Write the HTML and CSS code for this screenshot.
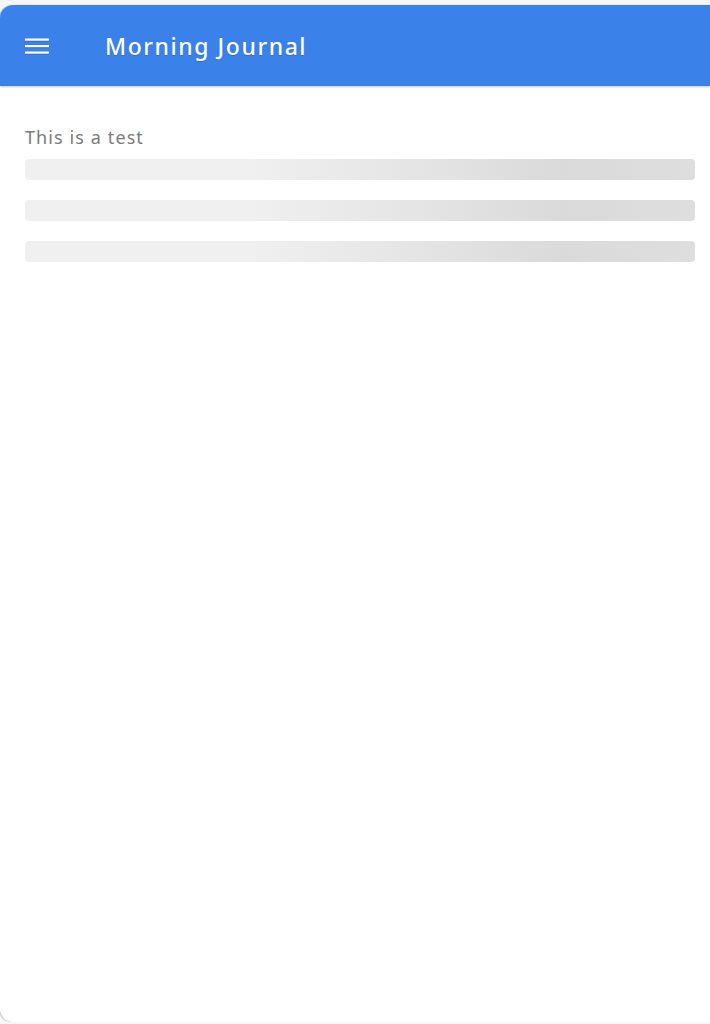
FILE: index.html
```html
<!DOCTYPE html>
<html lang="en">
<head>
<meta charset="utf-8">
<title>Morning Journal</title>
<link rel="stylesheet" href="styles.css">
</head>
<body>
<div class="card">
  <header class="appbar">
    <svg class="menu" width="24" height="18" viewBox="0 0 24 18" aria-hidden="true">
      <rect x="0" y="1.5" width="24" height="2.2" fill="#fff"/>
      <rect x="0" y="8" width="24" height="2.2" fill="#fff"/>
      <rect x="0" y="14.5" width="24" height="2.2" fill="#fff"/>
    </svg>
    <h1 class="title">Morning Journal</h1>
  </header>
  <main class="content">
    <p class="label">This is a test</p>
    <div class="skeleton"></div>
    <div class="skeleton"></div>
    <div class="skeleton"></div>
  </main>
</div>
</body>
</html>
```
FILE: styles.css
```css
html, body {
  margin: 0;
  padding: 0;
  background: #f6f6f6;
}
body {
  padding-top: 5px;
  font-family: "Noto Sans", "Open Sans", sans-serif;
}
.card {
  height: 1017px;
  background: #fff;
  border-radius: 13px 0 0 13px;
  box-shadow: -1px 0 1px rgba(0,0,0,0.25);
  overflow: hidden;
}
.appbar {
  height: 81px;
  box-sizing: border-box;
  background: #3a82e9;
  display: flex;
  align-items: center;
  padding-left: 25px;
  box-shadow: 0 1px 2px rgba(0,0,0,0.22);
  position: relative;
}
.menu {
  display: block;
  filter: drop-shadow(0 1px 0 rgba(0,0,0,0.15));
}
.title {
  margin: 0 0 0 56px;
  color: #fff;
  font-size: 23px;
  font-weight: 500;
  letter-spacing: 1.55px;
  text-shadow: 0 1px 1px rgba(0,0,0,0.15);
}
.content {
  padding: 39px 15px 0 25px;
}
.label {
  margin: 0 0 10px;
  color: #7b7b7b;
  font-size: 18px;
  line-height: 24px;
  letter-spacing: 1.1px;
}
.skeleton {
  height: 21px;
  border-radius: 4px;
  margin-bottom: 20px;
  background: linear-gradient(90deg, #f0f0f0 0%, #f0f0f0 33%, #e4e4e4 60%, #dadada 80%, #dedede 100%);
}
```
